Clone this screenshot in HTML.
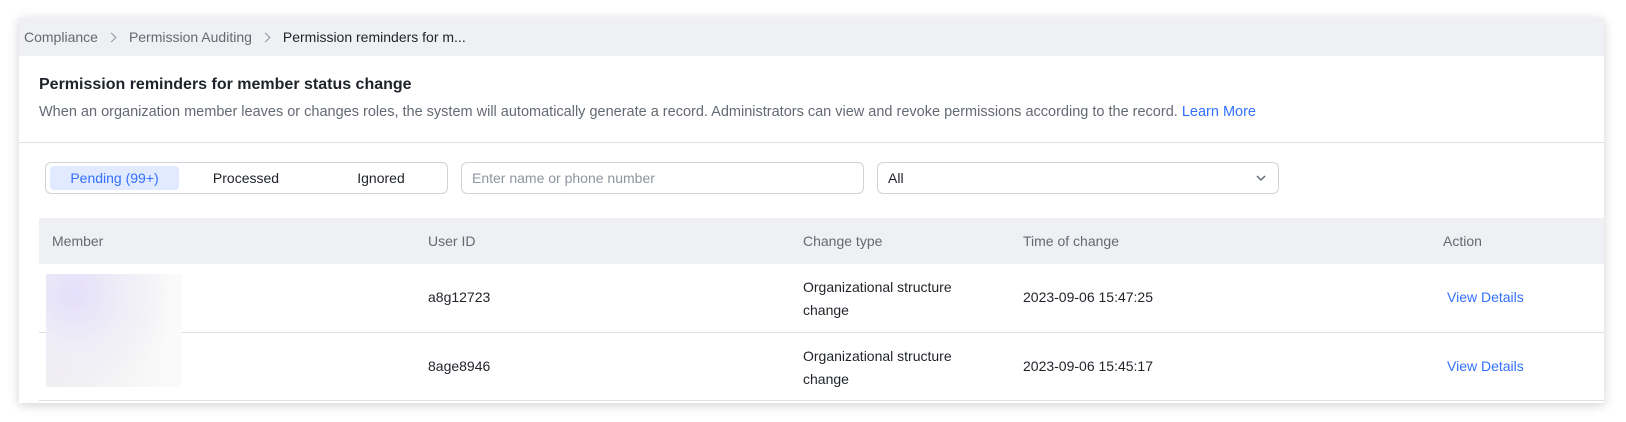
<!DOCTYPE html>
<html><head><meta charset="utf-8"><style>
*{box-sizing:border-box;margin:0;padding:0}
body{width:1626px;height:422px;background:#fff;font-family:"Liberation Sans",sans-serif;color:#1f2329;position:relative;overflow:hidden}
.win{position:absolute;left:19px;top:18px;width:1585px;height:385px;background:#fff;box-shadow:0 2px 10px rgba(0,0,0,.18);overflow:hidden}
.bc{height:38px;background:#eff0f3;font-size:14px;color:#646a73;padding-left:5px;line-height:38px;white-space:nowrap}
.bc .s{display:inline-block;width:7px;height:7px;border-right:1.3px solid #8f959e;border-top:1.3px solid #8f959e;transform:rotate(45deg);margin:0 14px 1px 10px}
.bc b{font-weight:normal;color:#1f2329}
.abs{position:absolute;white-space:nowrap}
.t{left:20px;top:58px;font-size:16px;font-weight:bold;color:#1f2329}
.d{left:20px;top:86px;font-size:14.5px;color:#646a73}
.d a{color:#3370ff;text-decoration:none}
.hr{left:0;top:124px;width:100%;height:1px;background:#dee0e3}
.tabs{left:26px;top:144px;width:403px;height:32px;border:1px solid #d0d3d6;border-radius:6px;font-size:14px}
.tab{position:absolute;top:3px;height:24px;line-height:24px;text-align:center}
.box{top:144px;height:32px;border:1px solid #d0d3d6;border-radius:6px;font-size:14px;line-height:30px;padding-left:10px}
.th{left:20px;top:200px;width:1570px;height:46px;background:#eff0f3}
.cell{position:absolute;font-size:14px;white-space:nowrap}
.hd{color:#646a73;top:215px}
.line{position:absolute;left:20px;width:1570px;height:1px;background:#dee0e3}
.blue{color:#3370ff}
</style></head><body>
<div class="win">
<div class="bc">Compliance<span class="s"></span>Permission Auditing<span class="s"></span><b>Permission reminders for m...</b></div>
<div class="abs t">Permission reminders for member status change</div>
<div class="abs d">When an organization member leaves or changes roles, the system will automatically generate a record. Administrators can view and revoke permissions according to the record. <a>Learn More</a></div>
<div class="abs hr"></div>
<div class="abs tabs">
<div class="tab" style="left:4px;width:129px;background:#e1eaff;border-radius:4px;color:#3370ff">Pending (99+)</div>
<div class="tab" style="left:150px;width:100px">Processed</div>
<div class="tab" style="left:290px;width:90px">Ignored</div>
</div>
<div class="abs box" style="left:442px;width:403px;color:#8f959e">Enter name or phone number</div>
<div class="abs box" style="left:858px;width:402px">All
<svg style="position:absolute;right:12px;top:11px" width="10" height="8" viewBox="0 0 10 8"><path d="M1 2l4 4 4-4" fill="none" stroke="#646a73" stroke-width="1.5"/></svg></div>
<div class="abs th"></div>
<div class="cell hd" style="left:33px">Member</div>
<div class="cell hd" style="left:409px">User ID</div>
<div class="cell hd" style="left:784px">Change type</div>
<div class="cell hd" style="left:1004px">Time of change</div>
<div class="cell hd" style="left:1424px">Action</div>
<div class="line" style="top:314px"></div>
<div class="line" style="top:382px"></div>
<div class="abs" style="left:27px;top:256px;width:136px;height:113px;background:radial-gradient(circle at 20% 18%,#e4defa 0,#efedf7 35%,transparent 70%),linear-gradient(90deg,#efeef1,#f7f7f7 70%,#fbfbfb)"></div>
<div class="cell" style="left:409px;top:271px">a8g12723</div>
<div class="cell" style="left:784px;top:258px;line-height:23px">Organizational structure<br>change</div>
<div class="cell" style="left:1004px;top:271px">2023-09-06 15:47:25</div>
<div class="cell blue" style="left:1428px;top:271px">View Details</div>
<div class="cell" style="left:409px;top:340px">8age8946</div>
<div class="cell" style="left:784px;top:327px;line-height:23px">Organizational structure<br>change</div>
<div class="cell" style="left:1004px;top:340px">2023-09-06 15:45:17</div>
<div class="cell blue" style="left:1428px;top:340px">View Details</div>
</div>
</body></html>
